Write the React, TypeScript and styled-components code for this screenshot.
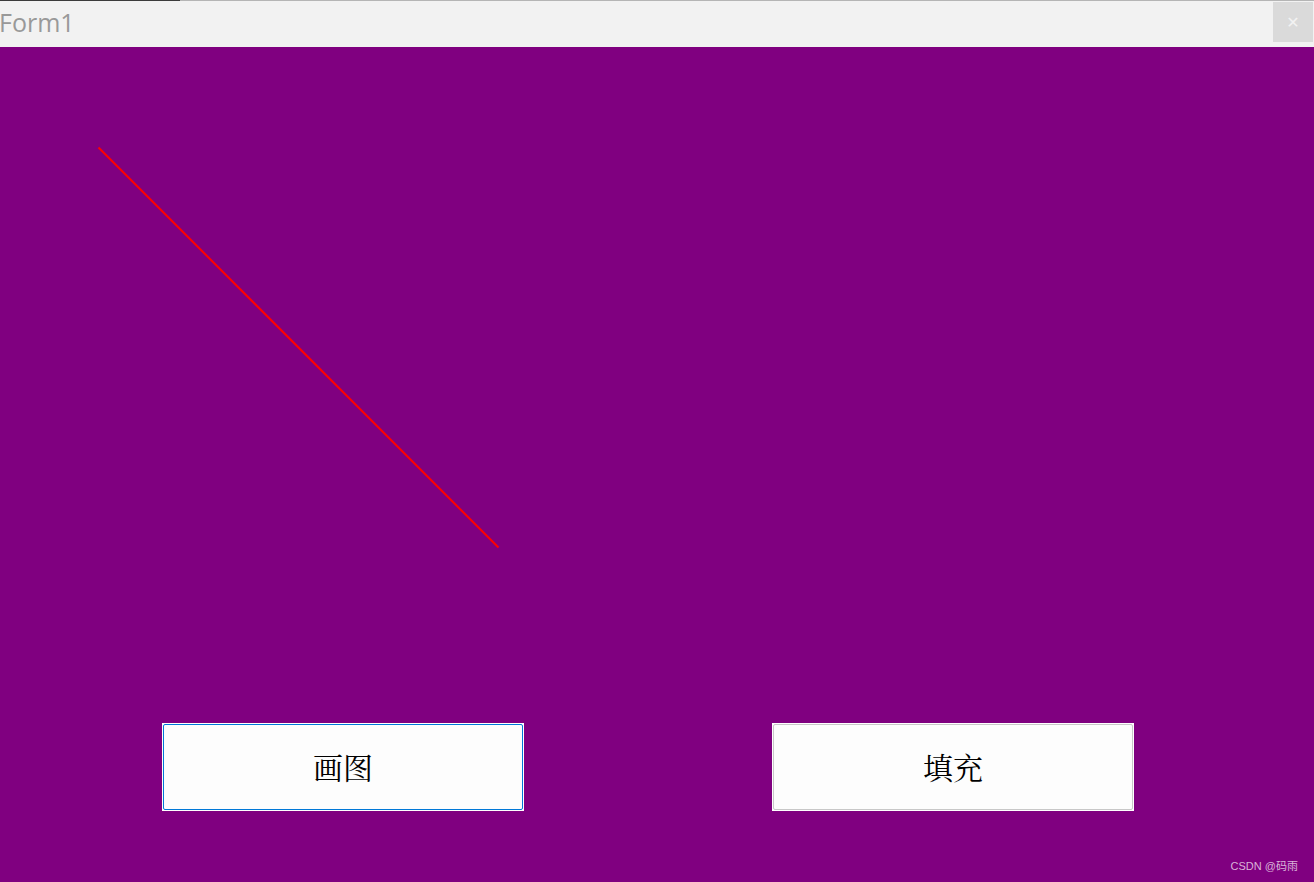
import React from "react";
import styled, { createGlobalStyle } from "styled-components";

const Global = createGlobalStyle`
  html, body { margin: 0; padding: 0; }
  body { width: 1314px; height: 882px; overflow: hidden; background: #800080; }
  #root { width: 1314px; height: 882px; }
`;

const Window = styled.div`
  position: relative;
  width: 1314px;
  height: 882px;
  display: flex;
  flex-direction: column;
  background: #800080;
`;

const TitleBar = styled.div`
  height: 46px;
  flex: none;
  display: flex;
  align-items: flex-start;
  justify-content: space-between;
  background: #f2f2f2;
  border-top: 1px solid #b5b5b5;
  position: relative;
`;

const TopAccent = styled.div`
  position: absolute;
  left: 0;
  top: -1px;
  width: 180px;
  height: 1px;
  background: #3c3c3c;
`;

const Title = styled.span`
  font-family: "Open Sans", "Noto Sans", sans-serif;
  font-size: 25px;
  line-height: 42px;
  color: #999999;
  margin-left: -1px;
`;

const CloseButton = styled.div`
  width: 40px;
  height: 40px;
  margin-top: 1px;
  margin-right: 1px;
  background: #dadada;
  display: flex;
  align-items: center;
  justify-content: center;
  color: #f2f2f2;
  font-family: "DejaVu Sans", sans-serif;
  font-size: 16px;
`;

const Client = styled.div`
  flex: 1;
  display: flex;
  flex-direction: column;
`;

const Drawing = styled.svg`
  display: block;
  width: 1314px;
  height: 676px;
  flex: none;
`;

const ButtonRow = styled.div`
  display: flex;
  gap: 248px;
  padding-left: 162px;
`;

const FormButton = styled.div`
  width: 362px;
  height: 88px;
  box-sizing: border-box;
  background: #ffffff;
  padding: 1px;
  display: flex;
`;

const ButtonFace = styled.div<{ $focused?: boolean }>`
  flex: 1;
  border: 1px solid ${(p) => (p.$focused ? "#0078d7" : "#c8c8c8")};
  border-radius: 2px;
  background: #fdfdfd;
  display: flex;
  align-items: center;
  justify-content: center;
  padding-bottom: 2px;
  font-family: "Noto Serif CJK SC", "Noto Sans CJK SC", serif;
  font-size: 30px;
  color: #000000;
`;

const Watermark = styled.span`
  position: absolute;
  right: 16px;
  bottom: 9px;
  font-family: "Liberation Sans", "Noto Sans CJK SC", sans-serif;
  font-size: 11px;
  color: #d9b3d9;
`;

export default function App() {
  return (
    <>
      <Global />
      <Window>
        <TitleBar>
          <TopAccent />
          <Title>Form1</Title>
          <CloseButton>✕</CloseButton>
        </TitleBar>
        <Client>
          <Drawing viewBox="0 0 1314 676">
            <line x1="98.5" y1="100.5" x2="498.5" y2="500.5" stroke="#ff0000" strokeWidth="2" />
          </Drawing>
          <ButtonRow>
            <FormButton>
              <ButtonFace $focused>画图</ButtonFace>
            </FormButton>
            <FormButton>
              <ButtonFace>填充</ButtonFace>
            </FormButton>
          </ButtonRow>
        </Client>
        <Watermark>CSDN @码雨</Watermark>
      </Window>
    </>
  );
}
